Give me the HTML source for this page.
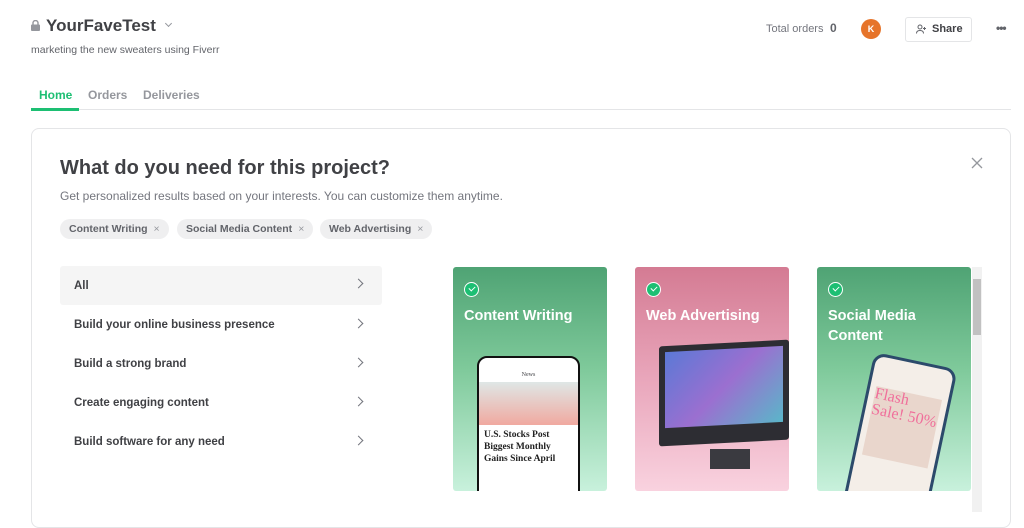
<!DOCTYPE html>
<html><head><style>
*{margin:0;padding:0;box-sizing:border-box}
body{width:1024px;height:512px;overflow:hidden;background:#fff;font-family:"Liberation Sans",sans-serif;color:#404145;position:relative}
.a{position:absolute}
.tab{font-size:12px;font-weight:bold;color:#95979d}
.chip{position:absolute;top:219px;height:20px;background:#efeff0;border-radius:10px;font-size:10.5px;font-weight:bold;color:#62646a;line-height:20px;padding:0 9px}
.chip span{color:#95979d;margin-left:6px;font-weight:normal}
.row{position:absolute;left:60px;width:322px;height:39px;font-size:11.5px;font-weight:bold;color:#404145;line-height:39px;padding-left:14px}
.row i{position:absolute;right:20px;top:14px;width:7px;height:7px;border-right:1.3px solid #74767e;border-top:1.3px solid #74767e;transform:rotate(45deg)}
.card{position:absolute;top:267px;width:154px;height:224px;border-radius:3px;overflow:hidden}
.card h3{position:absolute;left:11px;top:39px;color:#fff;font-size:14.5px;line-height:20px;font-weight:bold}
.chk{position:absolute;left:11px;top:15px;width:15px;height:15px;border-radius:50%;border:1.5px solid #fff;background:#1dbf73}
.chk:after{content:"";position:absolute;left:3.5px;top:2.5px;width:5px;height:3px;border-left:1.5px solid #fff;border-bottom:1.5px solid #fff;transform:rotate(-45deg)}
</style></head><body>
<svg class="a" style="left:31px;top:20px" width="9" height="11" viewBox="0 0 9 11"><rect x="0" y="4.5" width="9" height="6.5" rx="1" fill="#95979d"/><path d="M2 5V3a2.5 2.5 0 0 1 5 0v2" stroke="#95979d" stroke-width="1.4" fill="none"/></svg>
<div class="a" style="left:46px;top:16px;font-size:17px;font-weight:bold;color:#404145">YourFaveTest</div>
<div class="a" style="left:166px;top:21px;width:5px;height:5px;border-right:1px solid #95979d;border-bottom:1px solid #95979d;transform:rotate(45deg)"></div>
<div class="a" style="left:31px;top:44px;font-size:10.5px;color:#62646a">marketing the new sweaters using Fiverr</div>
<div class="a" style="left:766px;top:23px;font-size:11px;color:#74767e">Total orders</div>
<div class="a" style="left:830px;top:21px;font-size:12px;font-weight:bold;color:#62646a">0</div>
<div class="a" style="left:861px;top:19px;width:20px;height:20px;border-radius:50%;background:#e6742a;color:#fff;font-size:9px;font-weight:bold;text-align:center;line-height:20px">K</div>
<div class="a" style="left:905px;top:17px;width:67px;height:25px;border:1px solid #e4e5e7;border-radius:3px;font-size:11px;font-weight:bold;line-height:23px;padding-left:26px;color:#404145">Share</div>
<svg class="a" style="left:916px;top:24px" width="11" height="10" viewBox="0 0 11 10"><circle cx="4" cy="3" r="2" stroke="#62646a" fill="none"/><path d="M0.5 9.5c0-2 1.5-3 3.5-3s3.5 1 3.5 3" stroke="#62646a" fill="none"/><path d="M8.5 3v3M7 4.5h3" stroke="#62646a"/></svg>
<div class="a" style="left:996px;top:21px;font-size:12px;color:#62646a;letter-spacing:-1px;font-weight:bold">•••</div>
<div class="a tab" style="left:39px;top:88px;color:#1dbf73">Home</div>
<div class="a tab" style="left:88px;top:88px">Orders</div>
<div class="a tab" style="left:143px;top:88px">Deliveries</div>
<div class="a" style="left:31px;top:109px;width:980px;height:1px;background:#e4e5e7"></div>
<div class="a" style="left:31px;top:108px;width:48px;height:3px;background:#1dbf73"></div>
<div class="a" style="left:31px;top:128px;width:980px;height:400px;border:1px solid #e4e5e7;border-radius:8px"></div>
<div class="a" style="left:60px;top:157px;font-size:20px;font-weight:bold;color:#404145">What do you need for this project?</div>
<div class="a" style="left:60px;top:189px;font-size:12px;color:#74767e">Get personalized results based on your interests. You can customize them anytime.</div>
<svg class="a" style="left:971px;top:157px" width="12" height="12"><path d="M1 1L11 11M11 1L1 11" stroke="#95979d" stroke-width="1.3"/></svg>
<div class="chip" style="left:60px">Content Writing<span>×</span></div>
<div class="chip" style="left:177px">Social Media Content<span>×</span></div>
<div class="chip" style="left:320px">Web Advertising<span>×</span></div>
<div class="row" style="top:266px;background:#f5f5f5;border-radius:3px;line-height:40px">All<i></i></div>
<div class="row" style="top:306px">Build your online business presence<i></i></div>
<div class="row" style="top:345px">Build a strong brand<i></i></div>
<div class="row" style="top:384px">Create engaging content<i></i></div>
<div class="row" style="top:423px">Build software for any need<i></i></div>
<div class="card" style="left:453px;background:linear-gradient(#4fa374,#7ec99a 45%,#c8f1dc)"><div class="chk"></div><h3>Content Writing</h3>
<div class="a" style="left:24px;top:89px;width:103px;height:150px;background:#fff;border:2px solid #111;border-radius:10px;overflow:hidden">
<div style="font-family:'Liberation Serif',serif;font-size:6px;text-align:center;margin-top:14px">News</div>
<div style="height:43px;background:linear-gradient(#dfe7e6,#f0a9a0);margin-top:4px"></div>
<div style="font-family:'Liberation Serif',serif;font-weight:bold;font-size:9.5px;line-height:12px;padding:4px 5px;color:#222">U.S. Stocks Post Biggest Monthly Gains Since April</div></div></div>
<div class="card" style="left:635px;background:linear-gradient(#d47b93,#e9a6bb 50%,#f9d2df)"><div class="chk"></div><h3>Web Advertising</h3>
<div class="a" style="left:24px;top:76px;width:130px;height:100px;background:#2d2d33;border-radius:3px;transform:skewY(-3deg)"><div style="margin:6px;height:76px;background:linear-gradient(135deg,#5b79d6,#9b6fd0,#5ab6c9)"></div></div>
<div class="a" style="left:75px;top:182px;width:40px;height:20px;background:#3a3a40"></div></div>
<div class="card" style="left:817px;background:linear-gradient(#4fa374,#7ec99a 45%,#c8f1dc)"><div class="chk"></div><h3>Social Media<br>Content</h3>
<div class="a" style="left:40px;top:92px;width:85px;height:160px;background:#f4eee8;border:3px solid #2c4a6b;border-radius:12px;transform:rotate(12deg)"><div style="margin:30px 6px;height:70px;background:#e9d6cc;color:#f06f9b;font-size:16px;font-family:'Liberation Serif',serif;line-height:16px">Flash Sale! 50%</div></div></div>
<div class="a" style="left:972px;top:267px;width:10px;height:245px;background:#f1f1f1"></div>
<div class="a" style="left:973px;top:279px;width:8px;height:56px;background:#c1c1c1"></div>
</body></html>
